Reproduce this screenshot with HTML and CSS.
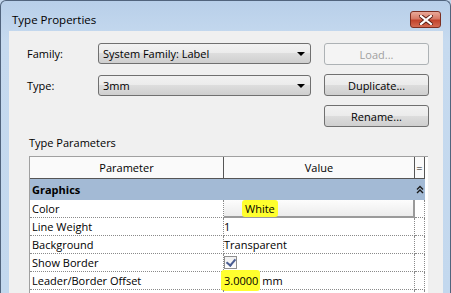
FILE: index.html
```html
<!DOCTYPE html>
<html lang="en">
<head>
  <meta charset="UTF-8" />
  <title>Type Properties</title>
  <link rel="stylesheet" href="styles.css">
</head>
<body>
  <div class="window">
    <!-- Title bar -->
    <div class="titlebar">
      <span class="title">Type Properties</span>
      <div class="close">
        <svg width="14" height="10" viewBox="0 0 14 10">
          <path d="M2 1 L12 9 M12 1 L2 9" stroke="#5a1e14" stroke-width="4" stroke-linecap="square"/>
          <path d="M2 1 L12 9 M12 1 L2 9" stroke="#fff" stroke-width="2.2" stroke-linecap="square"/>
        </svg>
      </div>
    </div>

    <div class="client">
      <div class="top">
        <div class="fields">
          <div class="field">
            <span class="field-label">Family:</span>
            <div class="select">System Family: Label<span class="arrow"></span></div>
          </div>
          <div class="field">
            <span class="field-label">Type:</span>
            <div class="select">3mm<span class="arrow"></span></div>
          </div>
        </div>
        <div class="buttons">
          <div class="btn disabled">Load...</div>
          <div class="btn">Duplicate...</div>
          <div class="btn">Rename...</div>
        </div>
      </div>

      <div class="section-label">Type Parameters</div>

      <div class="props">
        <div class="grid">
          <div class="head">Parameter</div>
          <div class="head">Value</div>
          <div class="head eq">=</div>

          <div class="group">Graphics</div>
          <div class="group"></div>
          <div class="group toggle">
            <svg width="8" height="9" viewBox="0 0 8 9">
              <path d="M1 4.5 L4 1.5 L7 4.5 M1 8 L4 5 L7 8" fill="none" stroke="#1a1a1a" stroke-width="1.4"/>
            </svg>
          </div>

          <div class="cell">Color</div>
          <div class="cell color-btn"><span class="mark">White</span></div>
          <div class="cell end"></div>

          <div class="cell">Line Weight</div>
          <div class="cell val">1</div>
          <div class="cell end"></div>

          <div class="cell">Background</div>
          <div class="cell val">Transparent</div>
          <div class="cell end"></div>

          <div class="cell">Show Border</div>
          <div class="cell val"><span class="check"></span></div>
          <div class="cell end"></div>

          <div class="cell">Leader/Border Offset</div>
          <div class="cell val"><span class="mark num">3.0000</span> mm</div>
          <div class="cell end"></div>

          <div class="cell"></div>
          <div class="cell val"></div>
          <div class="cell end"></div>
        </div>
      </div>
    </div>
  </div>
</body>
</html>
```

FILE: styles.css
```css
* {
  box-sizing: border-box;
  font-family: 'Open Sans', sans-serif;
}

html, body {
  margin: 0;
  padding: 0;
  height: 100%;
  overflow: hidden;
  background: #c3d7ed;
}

.window {
  width: 451px;
  height: 293px;
  border: 1px solid #51647d;
  border-bottom: none;
  border-radius: 6px 6px 0 0;
  background: linear-gradient(#b8cfe9, #c6daef 40px, #c3d8ee);
  display: flex;
  flex-direction: column;
  overflow: hidden;
}

.titlebar {
  height: 30px;
  flex-shrink: 0;
  display: flex;
  align-items: flex-start;
  justify-content: space-between;
  padding: 0 9px 0 11px;
}

.title {
  font-size: 11.5px;
  color: #000;
  margin-top: 11px;
}

.close {
  width: 31px;
  height: 17px;
  margin-top: 10px;
  border: 1px solid #7d2f22;
  border-radius: 3px;
  background: linear-gradient(#e9a999, #d77a66 45%, #c2432c 55%, #d46b53);
  display: flex;
  justify-content: center;
  align-items: center;
}

.client {
  flex: 1;
  margin: 0 7px 0 8px;
  background: #f0f0f0;
  padding: 12px 0 0 18px;
  font-size: 11px;
  color: #000;
}

.top {
  display: flex;
  gap: 13px;
}

.fields {
  display: flex;
  flex-direction: column;
  gap: 11px;
}

.field {
  display: flex;
  align-items: center;
}

.field-label {
  width: 71px;
}

.select {
  width: 213px;
  height: 21px;
  border: 1px solid #707070;
  border-radius: 3px;
  background: linear-gradient(#f2f2f2, #ebebeb 50%, #dddddd 50%, #cfcfcf);
  display: flex;
  align-items: center;
  padding-left: 4px;
  position: relative;
}

.arrow {
  position: absolute;
  right: 5px;
  top: 8px;
  border-left: 4px solid transparent;
  border-right: 4px solid transparent;
  border-top: 4px solid #000;
}

.buttons {
  display: flex;
  flex-direction: column;
  gap: 9px;
}

.btn {
  width: 105px;
  height: 22px;
  border: 1px solid #707070;
  border-radius: 3px;
  background: linear-gradient(#f2f2f2, #ebebeb 50%, #dddddd 50%, #cfcfcf);
  display: flex;
  justify-content: center;
  align-items: center;
}

.btn.disabled {
  border-color: #adb2b5;
  background: #f4f4f4;
  color: #a0a0a0;
}

.section-label {
  margin: 8px 0 0 2px;
  line-height: 16px;
}

.props {
  margin: 5px 0 0 2px;
  width: 399px;
  height: 200px;
  background: #fff;
  border-top: 1px solid #a0a0a0;
  border-left: 1px solid #a0a0a0;
}

.grid {
  display: grid;
  grid-template-columns: 194px 191px 10px;
  grid-template-rows: 22px 21px;
  grid-auto-rows: 18px;
}

.head {
  background: #fafafa;
  border-right: 1px solid #555;
  border-bottom: 1px solid #555;
  display: flex;
  justify-content: center;
  align-items: center;
}

.group {
  background: #a3bad5;
  font-weight: 700;
  display: flex;
  align-items: center;
  padding-left: 2px;
}

.group.toggle {
  justify-content: center;
  padding-left: 0;
}

.cell {
  border-right: 1px dotted #8a8a8a;
  border-bottom: 1px dotted #8a8a8a;
  display: flex;
  align-items: center;
  padding-left: 2px;
  white-space: nowrap;
}

.cell.val {
  padding-left: 0;
}

.cell.color-btn {
  padding-left: 21px;
  background: linear-gradient(#fdfdfd, #ececec);
  border-right: 2px solid #9a9a9a;
  border-bottom: 2px solid #9a9a9a;
}

.mark {
  background: #ffff2e;
  padding: 1px 3px 1px 3px;
  margin-left: -3px;
  border-radius: 3px;
}

.mark.num {
  padding: 3px 2px 3px 3px;
  margin-left: -3px;
  margin-right: 2px;
}

.check {
  width: 13px;
  height: 13px;
  border: 1px solid #8f8f8f;
  background: linear-gradient(#f0f0f0, #fdfdfd);
  position: relative;
}

.check::after {
  content: '';
  position: absolute;
  left: 3px;
  top: 0;
  width: 4px;
  height: 7px;
  border-right: 2px solid #4a5d92;
  border-bottom: 2px solid #4a5d92;
  transform: rotate(40deg);
}
```
